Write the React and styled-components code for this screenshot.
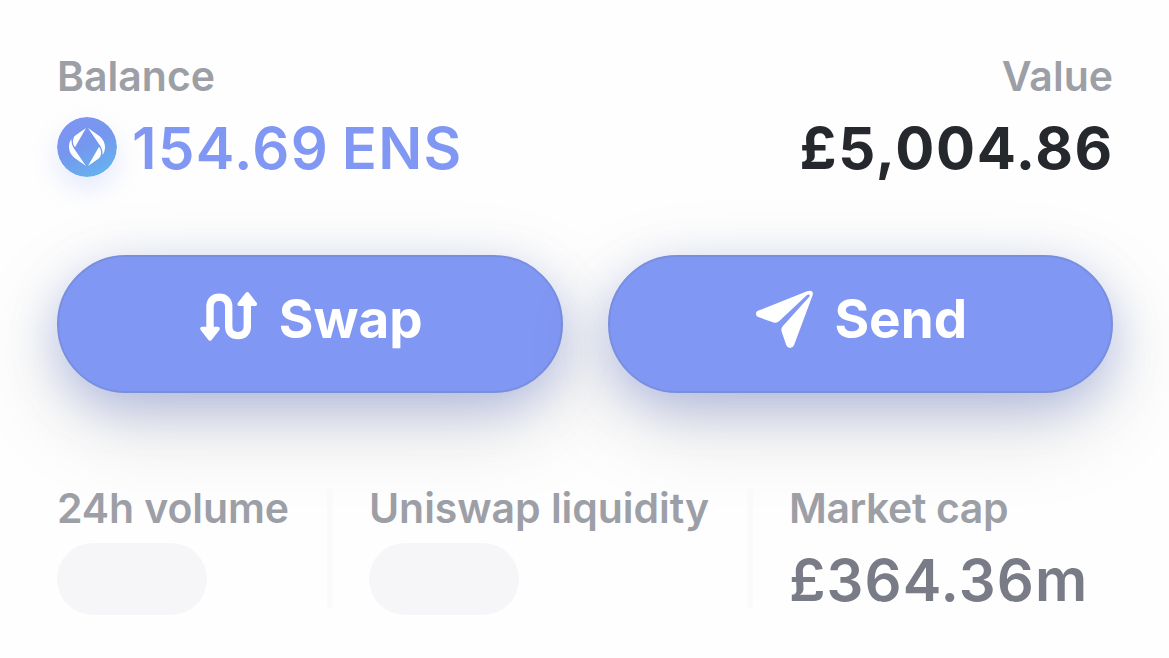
import styled, { createGlobalStyle } from "styled-components";

const GlobalStyle = createGlobalStyle`
    *{
        box-sizing: border-box;
    }
    body{
        margin: 0;
        background: #fefefe;
        font-family: "Inter", "Liberation Sans", sans-serif;
        -webkit-font-smoothing: antialiased;
    }
`;

const EnsCoin = ()=>{
    return(
        <Coin viewBox="0 0 180 180">
            <defs>
                <linearGradient id="ensGradient" x1="0.3" y1="0" x2="0.8" y2="1">
                    <stop offset="0" stopColor="#7f95f3"/>
                    <stop offset="0.45" stopColor="#7597ee"/>
                    <stop offset="1" stopColor="#64b6ee"/>
                </linearGradient>
            </defs>
            <circle cx="90" cy="90" r="90" fill="url(#ensGradient)"/>
            {/* each half is a short wing at the tip and a long crescent */}
            <path fill="#fff" d="M87 33L54 91C47 82 46 71 50 62C51 59 53 57 56 55Z"/>
            <path fill="#fff" d="M87 147L52 122C41 113 36 101 36 89C36 81 38 74 43 66C43 78 46 88 52 96Z"/>
            <path fill="#fff" d="M93 147L126 89C133 98 134 109 130 118C129 121 127 123 124 125Z"/>
            <path fill="#fff" d="M93 33L128 58C139 67 144 79 144 91C144 99 142 106 137 114C137 102 134 92 128 84Z"/>
        </Coin>
    )
};

const SwapIcon = ()=>{
    return(
        <svg width="60" height="54" viewBox="0 0 60 54" fill="none" stroke="#fff" strokeLinejoin="round">
            <path strokeWidth="7.4" d="M11 39V16.5C11 10.5 14.5 7.2 20.3 7.2S29.7 10.5 29.7 16.5V36.5C29.7 42.5 33.2 45.6 39 45.6S48.3 42.5 48.3 36.5V15"/>
            <path fill="#fff" strokeWidth="4" d="M3.2 38.7H18.8L11 48.7Z"/>
            <path fill="#fff" strokeWidth="4" d="M40.5 14.1H56.1L48.3 4.1Z"/>
        </svg>
    )
};

const SendIcon = ()=>{
    return(
        <svg width="60" height="60" viewBox="0 0 180 180">
            <path fill="#fff" d="M13 61L156 4Q167 0 172 5Q175 9 172 18L117 166Q114 174 105 174Q97 174 94 166L80 125Q77 116 83 109L163 20Q166 16 163 14Q160 12 156 15L73 93Q66 100 58 98L12 82Q3 79 3 71Q3 64 13 61Z"/>
        </svg>
    )
};

const Stat = (props)=>{
    return(
        <StatColumn $width={props.width}>
            <Label $spacing={props.spacing}>{props.title}</Label>
            {props.value ? <StatValue>{props.value}</StatValue> : <Skeleton/>}
        </StatColumn>
    )
};

const App = ()=>{
    return(
        <>
            <GlobalStyle/>
            <Sheet>
                <Summary>
                    <div>
                        <Label>Balance</Label>
                        <Balance>
                            <EnsCoin/>
                            <BalanceAmount>154.69 ENS</BalanceAmount>
                        </Balance>
                    </div>
                    <RightSide>
                        <Label>Value</Label>
                        <FiatValue>£5,004.86</FiatValue>
                    </RightSide>
                </Summary>
                <Actions>
                    <ActionButton>
                        <IconBox $lift={4}><SwapIcon/></IconBox>
                        <ButtonText $gap={20}>Swap</ButtonText>
                    </ActionButton>
                    <ActionButton>
                        <IconBox $lift={-1}><SendIcon/></IconBox>
                        <ButtonText $gap={19}>Send</ButtonText>
                    </ActionButton>
                </Actions>
                <Stats>
                    <Stat title="24h volume" width={270} spacing={-0.1}/>
                    <Divider/>
                    <Stat title="Uniswap liquidity" width={378} spacing={-0.05}/>
                    <Divider/>
                    <Stat title="Market cap" value="£364.36m" spacing={-0.4}/>
                </Stats>
            </Sheet>
        </>
    )
};

export default App;

const Sheet = styled.main`
    display: flex;
    flex-direction: column;
    width: 1169px;
    height: 658px;
    padding: 52px 56px 0 57px;
    overflow: hidden;
    background: #fefefe;
`;

const Summary = styled.section`
    display: flex;
    justify-content: space-between;
    height: 203px;
`;

const RightSide = styled.div`
    text-align: right;
`;

const Label = styled.div`
    height: 48px;
    line-height: 48px;
    font-size: 41px;
    font-weight: 600;
    color: #9d9fa7;
    white-space: nowrap;
    letter-spacing: ${props=>props.$spacing || 0}px;
`;

const Balance = styled.div`
    display: flex;
    align-items: center;
    height: 60px;
    margin-top: 17px;
`;

const Coin = styled.svg`
    width: 60px;
    height: 60px;
    border-radius: 50%;
    box-shadow: 0 12px 27px rgba(128, 151, 243, 0.2);
`;

const BalanceAmount = styled.span`
    margin-left: 15px;
    padding-top: 2px;
    font-size: 58px;
    font-weight: 600;
    line-height: 60px;
    color: #8097f3;
    white-space: nowrap;
    letter-spacing: 1.4px;
    word-spacing: -3.5px;
`;

const FiatValue = styled.div`
    height: 60px;
    margin: 18px -1px 0 0;
    font-size: 58px;
    font-weight: 700;
    line-height: 60px;
    color: #25292e;
    letter-spacing: 1.7px;
`;

const Actions = styled.section`
    display: flex;
    gap: 45px;
`;

const ActionButton = styled.button`
    display: flex;
    flex: 1;
    align-items: center;
    justify-content: center;
    height: 138px;
    padding: 0 0 10px;
    border: 2px solid #788edf;
    border-radius: 69px;
    background: #8097f3;
    color: #fff;
    font-family: inherit;
    box-shadow: 0 30px 90px rgba(0, 0, 0, 0.15), 0 15px 45px rgba(128, 151, 243, 0.4);
    cursor: pointer;
`;

const IconBox = styled.span`
    display: flex;
    flex: none;
    margin: 0 -2px ${props=>props.$lift}px 2px;
`;

const ButtonText = styled.span`
    margin-left: ${props=>props.$gap}px;
    padding-left: 2px;
    font-size: 53px;
    font-weight: 700;
    line-height: 60px;
`;

const Stats = styled.section`
    display: flex;
    margin-top: 91px;
`;

const StatColumn = styled.div`
    flex: none;
    width: ${props=>props.$width ? `${props.$width}px` : "auto"};
`;

const Divider = styled.div`
    width: 6px;
    height: 119px;
    margin: 5px 36px 0 0;
    border-radius: 3px;
    background: #fafafb;
`;

const Skeleton = styled.div`
    width: 150px;
    height: 72px;
    margin-top: 11px;
    border-radius: 36px;
    background: #f6f6f9;
`;

const StatValue = styled.div`
    height: 72px;
    margin-top: 12px;
    font-size: 58px;
    font-weight: 600;
    line-height: 72px;
    color: #797c87;
    letter-spacing: 1.1px;
`;
